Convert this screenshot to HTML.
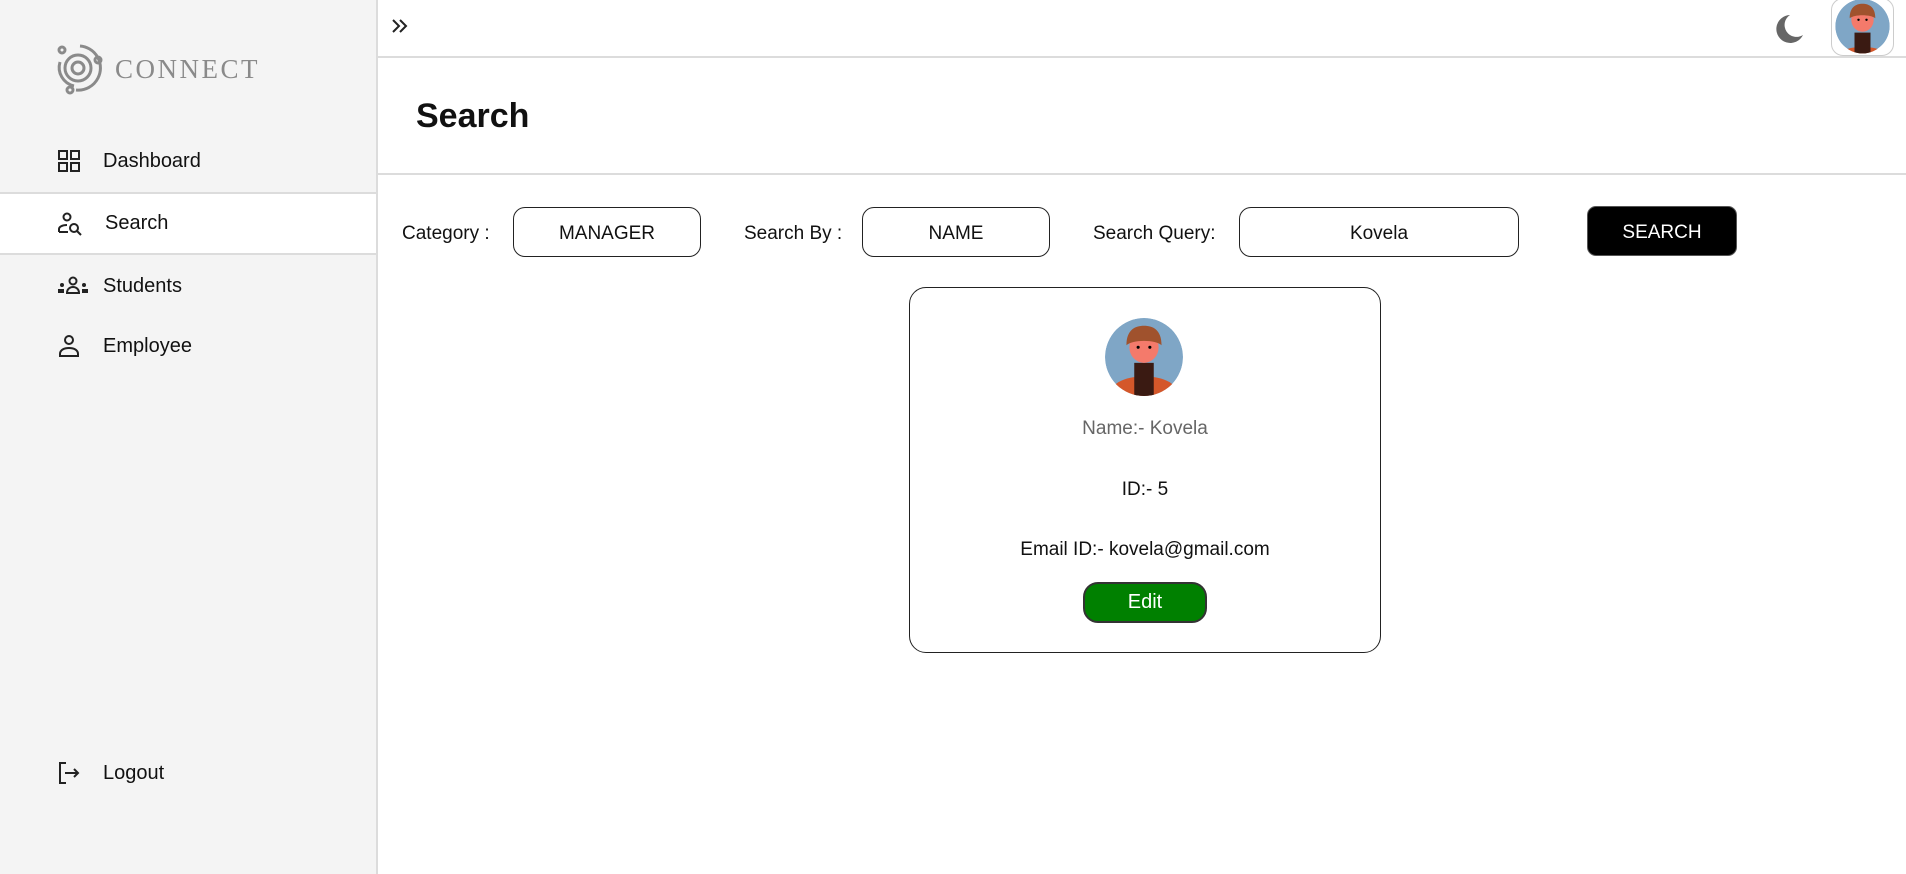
<!DOCTYPE html>
<html><head><meta charset="utf-8"><style>
*{box-sizing:border-box;margin:0;padding:0}
body{width:1906px;height:874px;font-family:"Liberation Sans",sans-serif;background:#fff;position:relative;overflow:hidden;color:#111}
.side{position:absolute;left:0;top:0;width:378px;height:874px;background:#f4f4f4;border-right:2px solid #dcdcdc}
.item{position:absolute;left:0;width:376px;height:62px;display:flex;align-items:center;font-size:20px}
.item svg{position:absolute;left:57px}
.item span{position:absolute;left:103px}
.abs{position:absolute}
.box{position:absolute;border:1.5px solid #222;border-radius:12px;display:flex;align-items:center;justify-content:center;font-size:19px;height:50px;top:207px;padding-top:3px}
.lbl{position:absolute;font-size:19px;top:223px}
</style></head><body>
<div class="side">
 <svg class="abs" style="left:52px;top:42px" width="52" height="54" viewBox="0 0 52 54" fill="none" stroke="#8a8a8a" stroke-width="3">
  <circle cx="26" cy="26" r="6"/><circle cx="26" cy="26" r="13"/>
  <path d="M8 20 A19 19 0 0 0 22 44"/><path d="M28 4 A22 22 0 0 1 46 36 A22 22 0 0 1 24 48"/>
  <circle cx="10" cy="8" r="3"/><circle cx="46" cy="18" r="3"/><circle cx="18" cy="48" r="3"/>
 </svg>
 <div class="abs" style="left:115px;top:54px;font-family:'Liberation Serif',serif;font-size:27px;letter-spacing:2.5px;color:#8a8a8a">CONNECT</div>
 <div class="item" style="top:130px"><svg width="24" height="24" viewBox="0 0 24 24" fill="none" stroke="#222" stroke-width="2"><rect x="2" y="2" width="8" height="8"/><rect x="14" y="2" width="8" height="8"/><rect x="2" y="14" width="8" height="8"/><rect x="14" y="14" width="8" height="8"/></svg><span>Dashboard</span></div>
 <div class="item" style="top:192px;height:63px;background:#fff;border-top:2px solid #dcdcdc;border-bottom:2px solid #dcdcdc"><svg width="28" height="24" viewBox="0 0 28 24" fill="none" stroke="#222" stroke-width="2"><circle cx="10" cy="5" r="3.5"/><path d="M2 20v-3c0-2 3-4 8-4"/><path d="M2 20h9"/><circle cx="17" cy="16" r="4"/><path d="M20 19l4 4"/></svg><span style="left:105px">Search</span></div>
 <div class="item" style="top:255px"><svg width="32" height="20" viewBox="0 0 32 20" fill="#222"><circle cx="16" cy="5" r="3.5" fill="none" stroke="#222" stroke-width="2"/><path d="M10 17c0-4 3-6 6-6s6 2 6 6z" fill="none" stroke="#222" stroke-width="2"/><circle cx="5" cy="9" r="2"/><rect x="1" y="13" width="6" height="4"/><circle cx="27" cy="9" r="2"/><rect x="25" y="13" width="6" height="4"/></svg><span>Students</span></div>
 <div class="item" style="top:315px"><svg width="24" height="24" viewBox="0 0 24 24" fill="none" stroke="#222" stroke-width="2"><circle cx="12" cy="6" r="4"/><path d="M3 22v-2c0-4 4-6 9-6s9 2 9 6v2z"/></svg><span>Employee</span></div>
 <div class="item" style="top:742px"><svg width="24" height="24" viewBox="0 0 24 24" fill="none" stroke="#222" stroke-width="2"><path d="M9 2H3v20h6"/><path d="M8 12h13M17 8l4 4-4 4"/></svg><span>Logout</span></div>
</div>
<div class="abs" style="left:378px;top:0;width:1528px;height:58px;border-bottom:2px solid #dcdcdc"></div>
<svg class="abs" style="left:391px;top:18px" width="18" height="16" viewBox="0 0 18 16" fill="none" stroke="#222" stroke-width="2"><path d="M2 2l6 6-6 6M9 2l6 6-6 6"/></svg>
<svg class="abs" style="left:1774px;top:13px" width="30" height="32" viewBox="0 0 30 32"><path d="M16 2A14 14 0 1 0 29 22 11 11 0 0 1 16 2z" fill="#666"/></svg>
<div class="abs" style="left:1831px;top:-2px;width:63px;height:58px;border:1px solid #ccc;border-radius:12px;background:#fff;overflow:hidden">
<svg width="61" height="56" viewBox="5 0 70 70" style="margin:0"><defs><clipPath id="c2"><circle cx="40" cy="34" r="34"/></clipPath></defs><g clip-path="url(#c2)"><circle cx="40" cy="34" r="34" fill="#7fa6c6"/><path d="M5 80c2-14 14-20 35-20s33 6 35 20z" fill="#d4572a"/><rect x="30" y="42" width="20" height="40" fill="#3a1a12"/><ellipse cx="40" cy="26" rx="14" ry="15" fill="#f47a6b"/><path d="M24 24c0-14 8-18 16-18s16 4 16 18c-6-5-26-5-32 0z" fill="#a0522d"/><circle cx="35" cy="26" r="1.5"/><circle cx="45" cy="26" r="1.5"/></g></svg></div>
<div class="abs" style="left:416px;top:97px;font-size:34px;font-weight:bold">Search</div>
<div class="abs" style="left:378px;top:173px;width:1528px;height:2px;background:#dcdcdc"></div>
<div class="lbl" style="left:402px">Category :</div>
<div class="box" style="left:513px;width:188px">MANAGER</div>
<div class="lbl" style="left:744px">Search By :</div>
<div class="box" style="left:862px;width:188px">NAME</div>
<div class="lbl" style="left:1093px">Search Query:</div>
<div class="box" style="left:1239px;width:280px">Kovela</div>
<div class="box" style="left:1587px;width:150px;background:#000;color:#fff;border-color:#555;border-radius:9px;top:206px">SEARCH</div>
<div class="abs" style="left:909px;top:287px;width:472px;height:366px;border:1.5px solid #222;border-radius:17px"></div>
<svg class="abs" style="left:1105px;top:318px" width="78" height="78" viewBox="0 0 80 80"><defs><clipPath id="c1"><circle cx="40" cy="40" r="40"/></clipPath></defs><g clip-path="url(#c1)"><circle cx="40" cy="40" r="40" fill="#7fa6c6"/><path d="M2 84c2-16 16-24 38-24s36 8 38 24z" fill="#d4572a"/><rect x="30" y="46" width="20" height="40" fill="#3a1a12"/><ellipse cx="40" cy="30" rx="15" ry="16" fill="#f47a6b"/><path d="M22 28c0-16 9-20 18-20s18 4 18 20c-6-6-30-6-36 0z" fill="#a0522d"/><circle cx="34" cy="30" r="1.6"/><circle cx="46" cy="30" r="1.6"/></g></svg>
<div class="abs" style="left:909px;width:472px;text-align:center;top:418px;font-size:19px;color:#666">Name:- Kovela</div>
<div class="abs" style="left:909px;width:472px;text-align:center;top:479px;font-size:19px">ID:- 5</div>
<div class="abs" style="left:909px;width:472px;text-align:center;top:539px;font-size:19px">Email ID:- kovela@gmail.com</div>
<div class="abs" style="left:1083px;top:582px;width:124px;height:41px;background:#008000;border:2px solid #333;border-radius:15px;color:#fff;font-size:20px;display:flex;align-items:center;justify-content:center">Edit</div>
</body></html>
